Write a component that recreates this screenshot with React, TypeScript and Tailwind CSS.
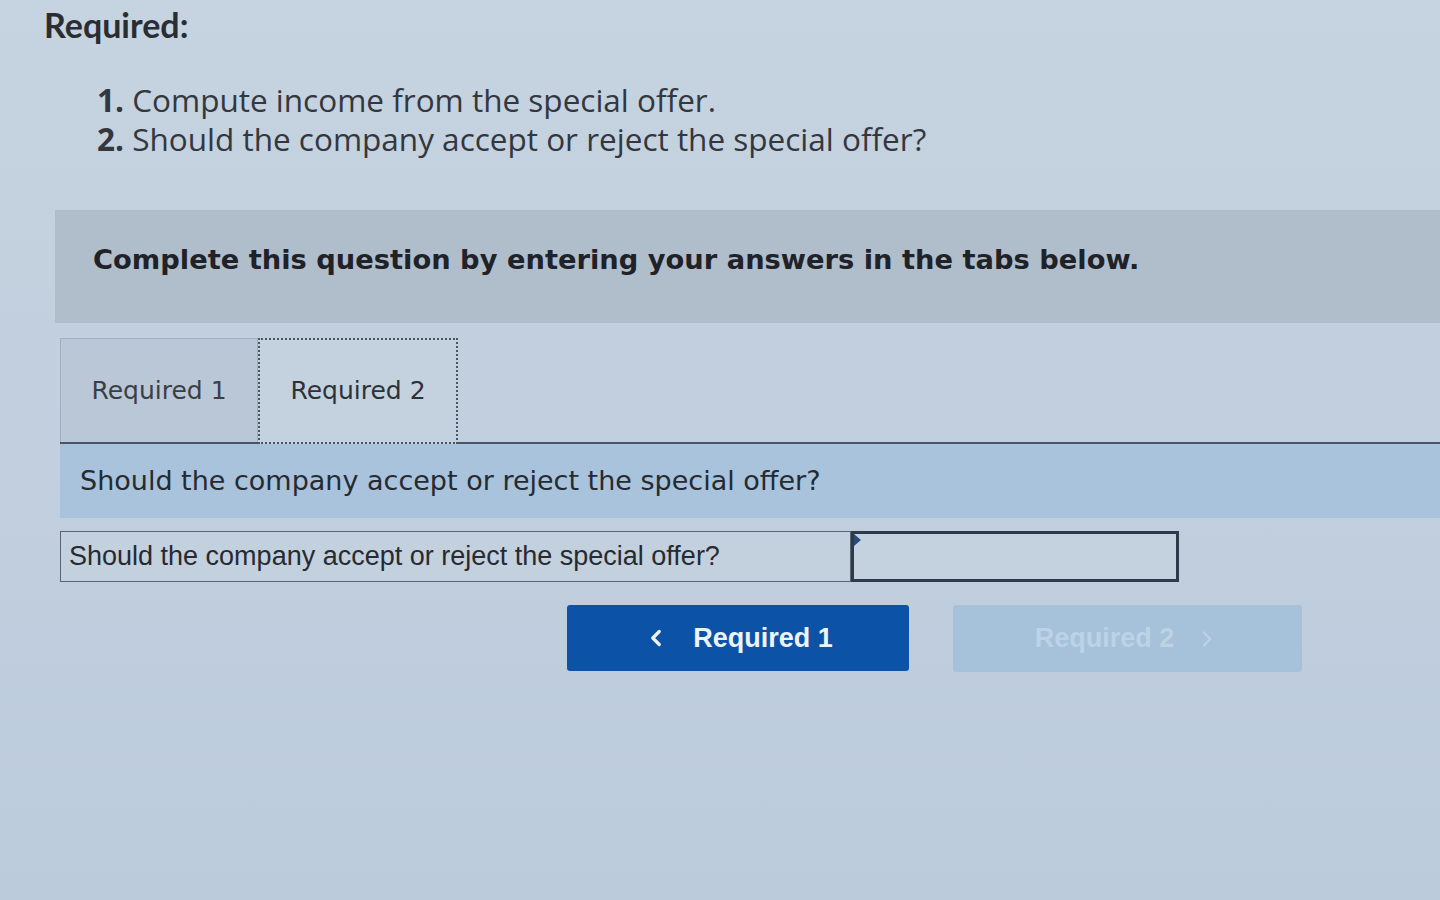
import { ChevronLeft, ChevronRight } from 'lucide-react'

const verdana = { fontFamily: '"DejaVu Sans", Verdana, sans-serif' }

export default function App() {
  return (
    <div className="min-h-[900px] w-[1440px] overflow-hidden bg-gradient-to-b from-[#c6d3e0] to-[#bccbdc] text-[#2b2f36]">
      <div className="pl-[44px] pt-[3px]">
        <h2 className="font-['Lato',sans-serif] text-[34px] font-bold leading-[44px] text-[#2a2d33]">
          Required:
        </h2>
        <ol className="mt-[33px] pl-[53px] font-['Open_Sans',sans-serif] text-[31.5px] leading-[39px] text-[#33373e]">
          <li>
            <span className="font-bold">1.</span> Compute income from the special offer.
          </li>
          <li>
            <span className="font-bold">2.</span> Should the company accept or reject the special offer?
          </li>
        </ol>
      </div>

      <div className="ml-[55px] mt-[52px] h-[113px] bg-[#b0bdcb] pl-[38px] pt-[30px]">
        <p style={verdana} className="text-[27.3px] font-bold leading-[40px] text-[#1f2228]">
          Complete this question by entering your answers in the tabs below.
        </p>
      </div>

      <div className="ml-[60px] mt-[15px]">
        <div className="flex h-[106px] items-end border-b-2 border-[#4a5563]">
          <button
            style={verdana}
            className="flex h-[104px] w-[198px] items-center justify-center border border-b-0 border-[#9fb0c2] bg-[#b9c7d6] text-[25px] text-[#3a3f47]"
          >
            Required 1
          </button>
          <button
            style={verdana}
            className="-mb-[2px] flex h-[106px] w-[200px] items-center justify-center border-2 border-dotted border-[#4a5563] bg-[#c4d1df] text-[25px] text-[#2d3138]"
          >
            Required 2
          </button>
        </div>

        <div className="flex h-[74px] items-center bg-[#a8c3db] pl-[20px]">
          <p style={verdana} className="text-[27px] text-[#262a31]">
            Should the company accept or reject the special offer?
          </p>
        </div>

        <div className="mt-[13px] flex h-[51px] w-[1119px] font-['Liberation_Sans',Arial,sans-serif]">
          <div className="flex w-[791px] items-center border border-[#5a6472] bg-[#c3d0de] pl-[8px] text-[27px] text-[#272b31]">
            Should the company accept or reject the special offer?
          </div>
          <div className="relative flex-1 border-[3px] border-[#2c3a4c] bg-[#c4d2e0]">
            <span className="absolute left-0 top-0 h-0 w-0 border-y-[6px] border-l-[7px] border-y-transparent border-l-[#2c4a78]" />
          </div>
        </div>

        <div className="mt-[23px] flex gap-[44px] pl-[507px] font-['Liberation_Sans',Arial,sans-serif]">
          <button className="flex h-[66px] w-[342px] items-center justify-center gap-[24px] rounded-[3px] bg-[#0c53a8] text-[27px] font-bold text-[#eef3f9]">
            <ChevronLeft className="h-[26px] w-[26px]" strokeWidth={3} />
            Required 1
          </button>
          <button className="flex h-[67px] w-[349px] items-center justify-center gap-[20px] rounded-[3px] bg-[#a6c2da] text-[27px] font-bold text-[#bdd2e5]">
            Required 2
            <ChevronRight className="h-[26px] w-[26px]" strokeWidth={2} />
          </button>
        </div>
      </div>
    </div>
  )
}
